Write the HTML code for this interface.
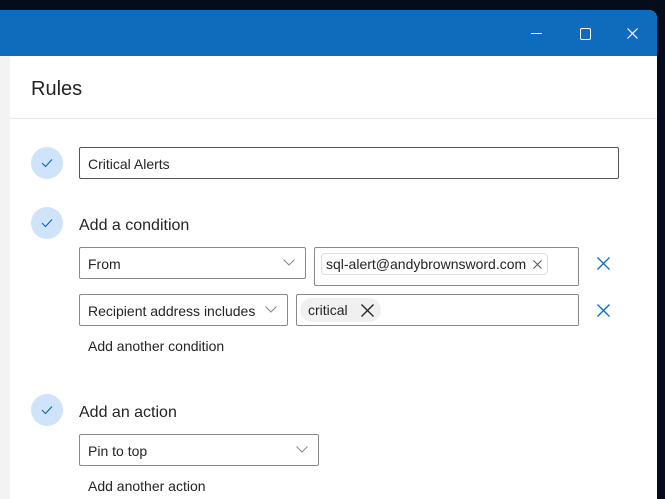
<!DOCTYPE html>
<html><head><style>
body{margin:0;width:665px;height:499px;overflow:hidden;background:#050d1c;font-family:"Liberation Sans",sans-serif;position:relative;color:#242424}
.win{position:absolute;left:0;top:10px;width:657px;height:489px;background:#fff;border-top-right-radius:8px;overflow:hidden}
.bar{position:absolute;left:0;top:0;width:657px;height:46px;background:#0f6cbd}
.side{position:absolute;left:0;top:46px;width:10px;bottom:0;background:#f3f3f3}
.a{position:absolute}
.t{font-size:14px;position:absolute;white-space:nowrap}
.box{position:absolute;border:1px solid #8a8a8a;border-radius:2px;box-sizing:border-box;background:#fff}
.chk{position:absolute;width:32px;height:32px;border-radius:50%;background:#cfe4fa}
</style></head><body>
<div class="win">
<div class="bar">
<div class="a" style="left:531px;top:23px;width:11px;height:1px;background:#fff"></div>
<div class="a" style="left:580px;top:18px;width:9px;height:10px;border:1px solid #fff;border-radius:2px"></div>
<svg class="a" style="left:627px;top:18px" width="11" height="11"><path d="M0.5 0.5L10.5 10.5M10.5 0.5L0.5 10.5" stroke="#fff" stroke-width="1.2"/></svg>
</div>
<div class="side"></div>
<div class="t" style="left:31px;top:68px;font-size:20px;color:#242424">Rules</div>
<div class="a" style="left:10px;top:108px;width:647px;height:1px;background:#e8e8e8"></div>

<div class="chk" style="left:31px;top:137px"></div>
<svg class="a" style="left:41px;top:148px" width="12" height="10"><path d="M1 5L4.5 8.5L11 1.5" stroke="#0f6cbd" fill="none" stroke-width="1.2"/></svg>
<div class="box" style="left:79px;top:137px;width:540px;height:32px;border-color:#555"></div>
<div class="t" style="left:88px;top:146px">Critical Alerts</div>

<div class="chk" style="left:31px;top:197px"></div>
<svg class="a" style="left:41px;top:208px" width="12" height="10"><path d="M1 5L4.5 8.5L11 1.5" stroke="#0f6cbd" fill="none" stroke-width="1.2"/></svg>
<div class="t" style="left:79px;top:207px;font-size:16px">Add a condition</div>

<div class="box" style="left:79px;top:237px;width:227px;height:32px"></div>
<div class="t" style="left:88px;top:246px">From</div>
<svg class="a" style="left:283px;top:249px" width="12" height="7"><path d="M0.5 0.5L6 6L11.5 0.5" stroke="#888" fill="none"/></svg>
<div class="box" style="left:314px;top:237px;width:265px;height:39px"></div>
<div class="a" style="left:321px;top:243px;width:227px;height:22px;border:1px solid #e0e0e0;border-radius:4px;box-sizing:border-box"></div>
<div class="t" style="left:326px;top:246px">sql-alert@andybrownsword.com</div>
<svg class="a" style="left:533px;top:250px" width="9" height="9"><path d="M0.5 0.5L8.5 8.5M8.5 0.5L0.5 8.5" stroke="#555" stroke-width="1"/></svg>
<svg class="a" style="left:597px;top:247px" width="13" height="13"><path d="M0.5 0.5L12.5 12.5M12.5 0.5L0.5 12.5" stroke="#0f6cbd" stroke-width="1.3"/></svg>

<div class="box" style="left:79px;top:284px;width:209px;height:32px"></div>
<div class="t" style="left:88px;top:293px">Recipient address includes</div>
<svg class="a" style="left:265px;top:296px" width="12" height="7"><path d="M0.5 0.5L6 6L11.5 0.5" stroke="#888" fill="none"/></svg>
<div class="box" style="left:296px;top:284px;width:283px;height:32px"></div>
<div class="a" style="left:300px;top:288px;width:81px;height:24px;border-radius:12px;background:#f0f0f0"></div>
<div class="t" style="left:308px;top:292px">critical</div>
<svg class="a" style="left:361px;top:294px" width="13" height="13"><path d="M0.5 0.5L12.5 12.5M12.5 0.5L0.5 12.5" stroke="#242424" stroke-width="1.3"/></svg>
<svg class="a" style="left:597px;top:294px" width="13" height="13"><path d="M0.5 0.5L12.5 12.5M12.5 0.5L0.5 12.5" stroke="#0f6cbd" stroke-width="1.3"/></svg>
<div class="t" style="left:88px;top:328px">Add another condition</div>

<div class="chk" style="left:31px;top:384px"></div>
<svg class="a" style="left:41px;top:395px" width="12" height="10"><path d="M1 5L4.5 8.5L11 1.5" stroke="#0f6cbd" fill="none" stroke-width="1.2"/></svg>
<div class="t" style="left:79px;top:394px;font-size:16px">Add an action</div>
<div class="box" style="left:79px;top:424px;width:240px;height:32px"></div>
<div class="t" style="left:88px;top:433px">Pin to top</div>
<svg class="a" style="left:296px;top:436px" width="12" height="7"><path d="M0.5 0.5L6 6L11.5 0.5" stroke="#888" fill="none"/></svg>
<div class="t" style="left:88px;top:468px">Add another action</div>
</div>
</body></html>
